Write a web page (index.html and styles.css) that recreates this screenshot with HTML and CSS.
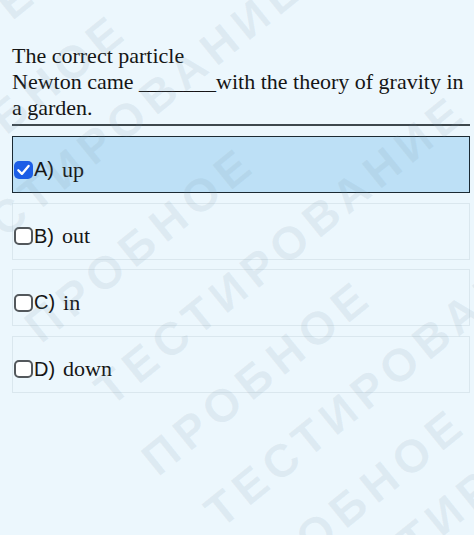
FILE: index.html
```html
<!DOCTYPE html>
<html lang="en">
<head>
<meta charset="utf-8">
<title>Question</title>
<link rel="stylesheet" href="styles.css">
</head>
<body>
<div class="page">
  <div class="question">The correct particle<br>Newton came _______with the theory of gravity in a garden.</div>
  <div class="options">
    <div class="option selected">
      <span class="box checked"><svg viewBox="0 0 19 18" width="19" height="18"><path d="M4.3 9.3 L7.9 12.9 L14.6 5" fill="none" stroke="#fff" stroke-width="2.3" stroke-linecap="round" stroke-linejoin="round"/></svg></span>
      <span class="letter">A)</span><span class="text">up</span>
    </div>
    <div class="option">
      <span class="box"></span>
      <span class="letter">B)</span><span class="text">out</span>
    </div>
    <div class="option">
      <span class="box"></span>
      <span class="letter">C)</span><span class="text">in</span>
    </div>
    <div class="option">
      <span class="box"></span>
      <span class="letter">D)</span><span class="text">down</span>
    </div>
  </div>
</div>
<div class="watermark" aria-hidden="true">
  <div class="wm-line w1">ПРОБНОЕ</div>
  <div class="wm-line w2">ПРОБНОЕ</div>
  <div class="wm-line w3">ТЕСТИРОВАНИЕ</div>
  <div class="wm-line w4">ПРОБНОЕ</div>
  <div class="wm-line w5">ТЕСТИРОВАНИЕ</div>
  <div class="wm-line w6">ПРОБНОЕ</div>
  <div class="wm-line w7">ТЕСТИРОВАНИЕ</div>
  <div class="wm-line w8">ПРОБНОЕ</div>
  <div class="wm-line w9">ТЕСТИРОВАНИЕ</div>
</div>
</body>
</html>
```
FILE: styles.css
```css
html, body {
  margin: 0;
  padding: 0;
  background: #ecf7fd;
}
body {
  width: 474px;
  height: 535px;
  overflow: hidden;
  position: relative;
}
.page {
  padding: 43px 4px 0 12px;
  position: relative;
  z-index: 1;
}
.question {
  font-family: "Liberation Serif", "Times New Roman", serif;
  font-size: 22px;
  line-height: 26px;
  color: #151515;
  padding-bottom: 3px;
  border-bottom: 2.5px solid #3e484d;
}
.options {
  display: flex;
  flex-direction: column;
  gap: 9.5px;
  margin-top: 10px;
}
.option {
  border: 1px solid #dae7ee;
  display: flex;
  align-items: center;
  padding: 10px 0 0 1px;
  height: 45px;
}
.option.selected {
  background: #bde0f6;
  border-color: #1b2a33;
}
.box {
  width: 15px;
  height: 14px;
  border: 2px solid #53585c;
  border-radius: 5px;
  background: #fff;
  flex: none;
  margin-right: 1px;
  display: flex;
  align-items: center;
  justify-content: center;
}
.box.checked {
  width: 19px;
  height: 18px;
  border: none;
  background: #1c5ee6;
  border-radius: 5px;
}
.box svg {
  display: block;
}
.letter {
  font-family: "Liberation Sans", Arial, sans-serif;
  font-size: 20px;
  color: #151515;
  margin-right: 8px;
}
.text {
  font-family: "Liberation Serif", "Times New Roman", serif;
  font-size: 22px;
  color: #151515;
}
.watermark {
  position: absolute;
  inset: 0;
  overflow: hidden;
  pointer-events: none;
  z-index: 2;
}
.wm-line {
  position: absolute;
  white-space: nowrap;
  font-family: "Liberation Sans", Arial, sans-serif;
  font-weight: bold;
  font-size: 46px;
  line-height: 46px;
  letter-spacing: 7px;
  color: rgba(120, 150, 165, 0.12);
  transform-origin: 0 50%;
  transform: rotate(-39deg);
}
.w1 { left: -187px; top: 139px; }
.w2 { left: -97px; top: 176px; }
.w3 { left: -62px; top: 249px; }
.w4 { left: 31px; top: 309px; }
.w5 { left: 101px; top: 372px; }
.w6 { left: 148px; top: 442px; }
.w7 { left: 211px; top: 494px; }
.w8 { left: 242px; top: 570px; }
.w9 { left: 317px; top: 595px; }
```
